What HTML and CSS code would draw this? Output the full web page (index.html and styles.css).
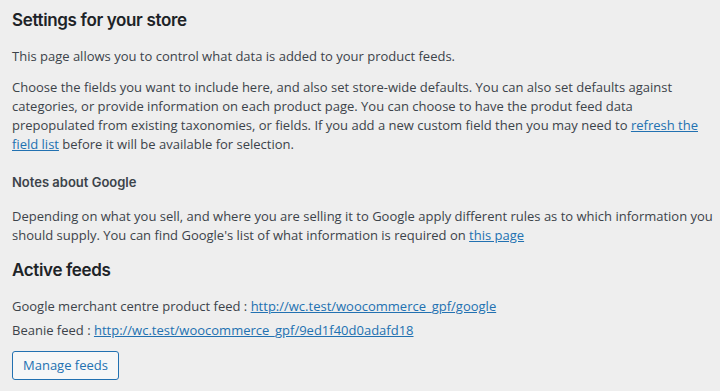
FILE: index.html
```html
<!DOCTYPE html>
<html lang="en">
<head>
  <meta charset="UTF-8">
  <title>Settings for your store</title>
  <link rel="stylesheet" href="styles.css">
</head>
<body>
  <div class="wrap">
    <h2>Settings for your store</h2>
    <p>This page allows you to control what data is added to your product feeds.</p>
    <p>Choose the fields you want to include here, and also set store-wide defaults. You can also set defaults against categories, or provide information on each product page. You can choose to have the produt feed data prepopulated from existing taxonomies, or fields. If you add a new custom field then you may need to <a href="#">refresh the field list</a> before it will be available for selection.</p>

    <h4>Notes about Google</h4>
    <p>Depending on what you sell, and where you are selling it to Google apply different rules as to which information you should supply. You can find Google's list of what information is required on <a href="#">this page</a></p>

    <h2 class="feeds-title">Active feeds</h2>
    <ul class="feeds">
      <li>Google merchant centre product feed : <a href="#">http://wc.test/woocommerce_gpf/google</a></li>
      <li>Beanie feed : <a href="#">http://wc.test/woocommerce_gpf/9ed1f40d0adafd18</a></li>
    </ul>
    <p class="actions"><a href="#" class="button">Manage feeds</a></p>
  </div>
</body>
</html>
```

FILE: styles.css
```css
body {
  font-family: "Open Sans", "Liberation Sans", sans-serif;
  font-size: 13px;
  line-height: 1.4;
  background: #eeeeee;
  color: #3c434a;
  margin: 0;
}

.wrap {
  padding: 0 5px 0 12px;
}

h2 {
  font-family: Inter, "Liberation Sans", sans-serif;
  font-size: 17px;
  font-weight: 600;
  letter-spacing: -0.35px;
  color: #1d2327;
  margin: 9px 0 14px;
}

h4 {
  font-family: Inter, "Liberation Sans", sans-serif;
  font-size: 13px;
  font-weight: 600;
  margin: 19px 0 16px;
}

p {
  line-height: 1.46;
  margin: 12px 0;
}

a {
  color: #2271b1;
}

.feeds-title {
  margin-top: 14px;
}

.feeds {
  list-style: none;
  margin: 0;
  padding: 0;
}

.feeds li {
  margin-bottom: 6px;
}

.actions {
  margin-top: 12px;
}

.button {
  display: inline-block;
  text-decoration: none;
  color: #2271b1;
  border: 1px solid #2271b1;
  background: #f6f7f7;
  border-radius: 3px;
  padding: 0 10px;
  line-height: 27px;
}
```
